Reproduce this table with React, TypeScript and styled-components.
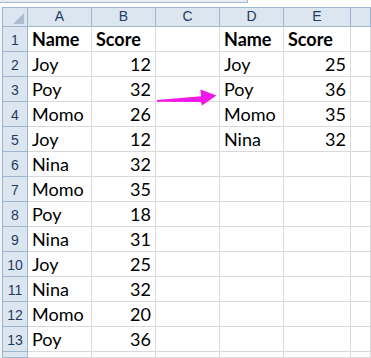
import React from "react";
import styled, { createGlobalStyle } from "styled-components";

const GlobalStyle = createGlobalStyle`
	html, body {
		margin: 0;
		padding: 0;
		background: #ffffff;
	}
	body {
		width: 371px;
		height: 358px;
		overflow: hidden;
		font-family: Lato, "Open Sans", sans-serif;
	}
`;

const HEAD_LINE = "#9eb6ce";
const GRID_LINE = "#d9d9d9";

const Root = styled.div`
	position: relative;
	display: flex;
	flex-direction: column;
	height: 358px;
	overflow: hidden;
`;

const FormulaStrip = styled.div`
	display: flex;
	height: 7px;
	flex: none;
`;

const FormulaBox = styled.div`
	width: 247px;
	height: 2px;
	background: #e6ecf4;
	border-bottom: 1px solid #a8b8cc;
	border-right: 1px solid #a8b8cc;
`;

const Sheet = styled.div`
	display: grid;
	grid-template-columns: 26px 64px 64px 64px 64px 67px 1fr;
	grid-template-rows: 20px repeat(13, 25px) 6px;
	padding-left: 2px;
	background: linear-gradient(90deg, #f0f3f7 0 2px, transparent 2px);
`;

const HeadBase = styled.div`
	box-sizing: border-box;
	background: #dce6f1;
	color: #1f3b60;
	font-family: "Liberation Sans", Arial, sans-serif;
	font-size: 14px;
	display: flex;
	align-items: flex-end;
	justify-content: center;
	overflow: hidden;
`;

const Corner = styled(HeadBase)`
	position: relative;
	border: 1px solid ${HEAD_LINE};
`;

const CornerMark = styled.div`
	position: absolute;
	right: 3px;
	bottom: 2px;
	width: 0;
	height: 0;
	border-left: 11px solid transparent;
	border-bottom: 11px solid #aebcd0;
`;

const ColHead = styled(HeadBase)`
	border-top: 1px solid ${HEAD_LINE};
	border-bottom: 1px solid ${HEAD_LINE};
	border-right: 1px solid ${HEAD_LINE};
	padding-bottom: 2px;
`;

const RowHead = styled(HeadBase)`
	border-left: 1px solid ${HEAD_LINE};
	border-right: 1px solid ${HEAD_LINE};
	border-bottom: 1px solid ${HEAD_LINE};
	padding-bottom: 3px;
`;

const Cell = styled.div<{ $right?: boolean; $bold?: boolean }>`
	box-sizing: border-box;
	border-right: 1px solid ${GRID_LINE};
	border-bottom: 1px solid ${GRID_LINE};
	display: flex;
	align-items: flex-end;
	justify-content: ${(p) => (p.$right ? "flex-end" : "flex-start")};
	padding: 0 4px 1px 4px;
	font-size: 18px;
	line-height: 22px;
	font-weight: ${(p) => (p.$bold ? 700 : 400)};
	color: #000000;
	white-space: nowrap;
	overflow: hidden;
`;

const Arrow = styled.svg`
	position: absolute;
	left: 155px;
	top: 86px;
	width: 64px;
	height: 22px;
`;

const COLUMNS = ["A", "B", "C", "D", "E", ""];

type Pair = [string, string] | null;

const left: Pair[] = [
	["Name", "Score"],
	["Joy", "12"],
	["Poy", "32"],
	["Momo", "26"],
	["Joy", "12"],
	["Nina", "32"],
	["Momo", "35"],
	["Poy", "18"],
	["Nina", "31"],
	["Joy", "25"],
	["Nina", "32"],
	["Momo", "20"],
	["Poy", "36"],
	null,
];

const right: Pair[] = [
	["Name", "Score"],
	["Joy", "25"],
	["Poy", "36"],
	["Momo", "35"],
	["Nina", "32"],
];

function PairCells({ pair, bold }: { pair: Pair | undefined; bold: boolean }) {
	return (
		<>
			<Cell $bold={bold}>{pair ? pair[0] : ""}</Cell>
			<Cell $right={!bold} $bold={bold}>
				{pair ? pair[1] : ""}
			</Cell>
		</>
	);
}

export default function App() {
	return (
		<Root>
			<GlobalStyle />
			<FormulaStrip>
				<FormulaBox />
			</FormulaStrip>
			<Sheet>
				<Corner>
					<CornerMark />
				</Corner>
				{COLUMNS.map((c, i) => (
					<ColHead key={i}>{c}</ColHead>
				))}
				{left.map((pair, i) => (
					<React.Fragment key={i}>
						<RowHead>{i < 13 ? i + 1 : ""}</RowHead>
						<PairCells pair={pair} bold={i === 0} />
						<Cell />
						<PairCells pair={right[i]} bold={i === 0} />
						<Cell />
					</React.Fragment>
				))}
			</Sheet>
			<Arrow viewBox="0 0 64 22">
				<polygon
					points="2,14 46,10.2 45.5,3.5 61.5,9.5 47,19.5 46,16 2,15.8"
					fill="#f318ea"
				/>
			</Arrow>
		</Root>
	);
}
